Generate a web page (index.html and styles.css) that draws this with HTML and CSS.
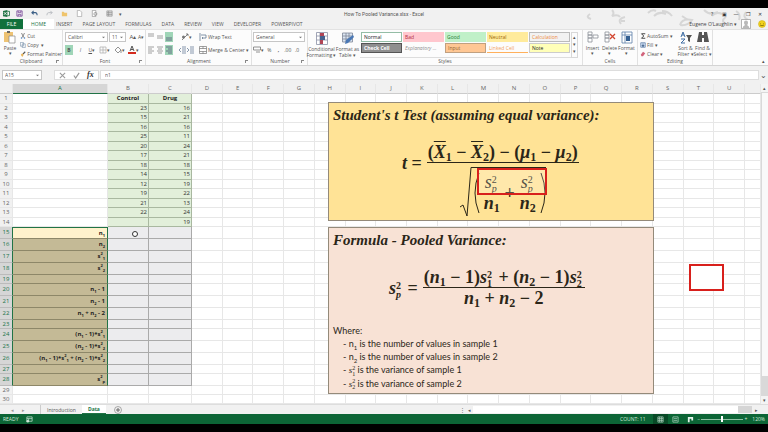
FILE: index.html
```html
<!doctype html>
<html lang="en">
  <head>
    <meta charset="utf-8">
    <title>How To Pooled Variance.xlsx - Excel</title>
    <link rel="stylesheet" href="styles.css">
  </head>

  <body>
    <div class="app">
      <header class="titlebar">
        <svg class="swirls" viewBox="0 0 180 20" aria-hidden="true">
          <path d="M14 6q-5 3 1 5M36 2q3 3 0 6q6-2 8 1M49 9q-8 2-4 7M45 13h4M72 5q4-4 8-2M78 8q5-5 12-2M86 3q6 0 10 5M104 17q2-7 12-5q-4 6-12 5M106 8l6 4M128 2q6 6 14 2M136 8q4-5 10-2M150 9q-6 4 0 7M160 3q5 3 3 9M170 4q-4 5 2 8"/>
        </svg>
        <div class="quick">
          <svg viewBox="0 0 8 8"><path fill="#217346" d="M0 1l5-1v8l-5-1z"/><path fill="none" stroke="#217346" d="M5 1.500h2.500v5h-2.500"/><path stroke="#fff" d="M1 2.500l3 3m0-3l-3 3"/></svg>
          <svg viewBox="0 0 8 8"><path fill="none" stroke="#80539f" d="M1 1h6v6h-6zM2.500 1v2h3v-2M2.500 7v-2h3v2"/></svg>
          <svg viewBox="0 0 8 8"><path fill="none" stroke="#3b5f86" stroke-width="1.200" d="M3 1l-2 2l2 2M1 3h4q2 0 2 3"/></svg>
          <svg viewBox="0 0 8 8"><path fill="none" stroke="#b4b8bd" d="M5 1l2 2l-2 2M7 3h-4q-2 0-2 3"/></svg>
          <svg viewBox="0 0 8 8"><path fill="#efc46c" d="M1 2h2l1 1h3v4h-6z"/></svg>
          <svg viewBox="0 0 8 8"><path fill="#fff" stroke="#999" stroke-width=".7" d="M1.500 .5h3l2 2v5h-5z"/></svg>
          <svg viewBox="0 0 8 8"><path fill="#fff" stroke="#888" stroke-width=".7" d="M1.500 .5h4v7h-4z"/><circle cx="5" cy="4.500" r="1.700" fill="none" stroke="#777" stroke-width=".7"/></svg>
          <svg viewBox="0 0 8 8"><path fill="#ddd" stroke="#888" stroke-width=".7" d="M1 1h6v6h-6zM1 3h6M1 5h6M3 1v6"/></svg>
          <span class="caret">▾</span>
        </div>
        <span class="doc-title">How To Pooled Variance.xlsx - Excel</span>
        <div class="win-buttons">
          <button>?</button><button>▣</button><button>—</button><button>❐</button><button>✕</button>
        </div>
      </header>

      <nav class="tabs">
        <button class="file">FILE</button>
        <button class="on">HOME</button>
        <button>INSERT</button>
        <button>PAGE LAYOUT</button>
        <button>FORMULAS</button>
        <button>DATA</button>
        <button>REVIEW</button>
        <button>VIEW</button>
        <button>DEVELOPER</button>
        <button>POWERPIVOT</button>
        <div class="account">
          <a href="#">Eugene O'Laughlin ▾</a>
          <svg class="avatar" viewBox="0 0 10 10"><path fill="#fff" stroke="#888" stroke-width=".6" d="M.5 .5h9v9h-9z"/><path fill="#b9b9b9" d="M3 3.500a2 2 0 0 1 4 0q0 2-1 2.500q2.500 1 2.500 3.500h-7q0-2.500 2.500-3.500q-1-1-1-2.500"/></svg>
          <svg class="smile" viewBox="0 0 8 8"><circle cx="4" cy="4" r="3.500" fill="#f2d21c" stroke="#c9a90c" stroke-width=".5"/><path fill="none" stroke="#6b5a00" stroke-width=".7" d="M2.500 3v.5M5.500 3v.5M2 5q2 1.500 4 0"/></svg>
        </div>
      </nav>

      <section class="ribbon">
        <div class="group clipboard">
          <div class="tools">
            <button class="big"><svg viewBox="0 0 12 13"><path fill="#eec374" d="M0 1h9v10h-9z"/><path fill="#666" d="M3 0h3v2h-3z"/><path fill="#fff" stroke="#888" stroke-width=".7" d="M5 5h6v7h-6z"/></svg>Paste<i>▾</i></button>
            <div class="stack">
              <button><svg viewBox="0 0 8 8"><path fill="none" stroke="#666" d="M2 0l3 6M6 0l-3 6"/><circle cx="2" cy="6.500" r="1" fill="#4a7ebb"/><circle cx="6" cy="6.500" r="1" fill="#4a7ebb"/></svg>Cut</button>
              <button><svg viewBox="0 0 8 8"><path fill="#fff" stroke="#7089a5" stroke-width=".8" d="M.5 .5h4v5h-4zM3 2.500h4v5h-4z"/></svg>Copy &nbsp;▾</button>
              <button><svg viewBox="0 0 8 8"><path stroke="#555" stroke-width="1.500" d="M7 1l-3 3"/><path fill="#e8b458" d="M1 5l2-2l2 2l-2 3z"/></svg>Format Painter</button>
            </div>
          </div>
          <h6>Clipboard</h6><span class="launch"></span>
        </div>

        <div class="group font">
          <div class="tools rows">
            <div class="row">
              <select class="face" aria-label="Font"><option>Calibri</option></select>
              <select class="size" aria-label="Font size"><option>11</option></select>
              <button class="grow">A▴</button><button>A▾</button>
            </div>
            <div class="row spread">
              <button class="pressed"><b>B</b></button><button><em>I</em></button><button><u>U</u> ▾</button>
              <button><svg viewBox="0 0 8 8"><path fill="none" stroke="#aaa" stroke-width=".7" d="M1 1h6v6h-6zM4 1v6M1 4h6"/></svg>▾</button>
              <button><svg viewBox="0 0 8 8"><path fill="none" stroke="#777" stroke-width=".8" d="M1 4l3-3l3 3l-3 3zM7 4v3"/></svg>▾</button>
              <button><svg viewBox="0 0 8 8"><path fill="none" stroke="#555" d="M2 5l2-5l2 5M3 3.500h2"/><path fill="#d42b1e" d="M0 6h8v2h-8z"/></svg>▾</button>
            </div>
          </div>
          <h6>Font</h6><span class="launch"></span>
        </div>

        <div class="group align">
          <div class="tools rows">
            <div class="row">
              <button><svg viewBox="0 0 8 8"><path stroke="#888" stroke-width=".8" d="M1 1h6M1 3h6"/></svg></button>
              <button><svg viewBox="0 0 8 8"><path stroke="#888" stroke-width=".8" d="M1 3h6M1 5h6"/></svg></button>
              <button class="pressed"><svg viewBox="0 0 8 8"><path stroke="#557" stroke-width=".8" d="M1 5h6M1 7h6"/></svg></button>
              <button class="orient"><svg viewBox="0 0 8 8"><path fill="none" stroke="#666" stroke-width=".8" d="M1 7l6-6M5 1h2v2"/><circle cx="2.500" cy="4" r="1.500" fill="#777"/></svg>▾</button>
              <button class="wrap"><svg viewBox="0 0 8 8"><path fill="none" stroke="#667c94" stroke-width=".8" d="M1 0v8M2 2h5v3h-4M4 4l-1 1l1 1"/></svg>Wrap Text</button>
            </div>
            <div class="row">
              <button><svg viewBox="0 0 8 8"><path stroke="#888" stroke-width=".8" d="M1 1h6M1 3h4M1 5h6M1 7h4"/></svg></button>
              <button><svg viewBox="0 0 8 8"><path stroke="#888" stroke-width=".8" d="M1 1h6M2 3h4M1 5h6M2 7h4"/></svg></button>
              <button class="pressed"><svg viewBox="0 0 8 8"><path stroke="#557" stroke-width=".8" d="M1 1h6M3 3h4M1 5h6M3 7h4"/></svg></button>
              <button class="orient"><svg viewBox="0 0 8 8"><path fill="none" stroke="#6a7f99" stroke-width=".8" d="M4 1h4M4 3h4M4 5h4M4 7h4M3 2l-2 2l2 2"/></svg><svg viewBox="0 0 8 8"><path fill="none" stroke="#6a7f99" stroke-width=".8" d="M4 1h4M4 3h4M4 5h4M4 7h4M1 2l2 2l-2 2"/></svg></button>
              <button class="wrap"><svg viewBox="0 0 8 8"><path fill="#fff" stroke="#777" stroke-width=".7" d="M.5 .5h7v7h-7zM.5 2.500h7M.5 5.500h7M4 .5v2M4 5.500v2"/></svg>Merge &amp; Center ▾</button>
            </div>
          </div>
          <h6>Alignment</h6><span class="launch"></span>
        </div>

        <div class="group number">
          <div class="tools rows">
            <div class="row"><select class="fmt" aria-label="Number format"><option>General</option></select></div>
            <div class="row spread">
              <button><svg viewBox="0 0 8 8"><path fill="none" stroke="#777" stroke-width=".8" d="M.5 1h7v3h-7zM3 6h4"/></svg>▾</button><button>%</button><button><b>,</b></button><button>.00</button><button>.0</button>
            </div>
          </div>
          <h6>Number</h6><span class="launch"></span>
        </div>

        <div class="group styles">
          <div class="tools">
            <button class="big wide"><svg viewBox="0 0 12 13"><path fill="#fff" stroke="#8a8fa5" stroke-width=".8" d="M.5 .5h11v12h-11zM.5 4h11M.5 8h11M4 .5v12"/><path fill="#b04455" d="M4 1h4v3h-4zM4 8h3v4h-3z"/><path fill="#46628e" d="M4 4h5v4h-5z"/></svg>Conditional<br>Formatting ▾</button>
            <button class="big narrow"><svg viewBox="0 0 12 13"><path fill="#dbe5f1" stroke="#7d8797" stroke-width=".8" d="M.5 1h10v9h-10zM.5 4h10M.5 7h10M4 1v9M7 1v9"/><path fill="#4a78b5" d="M4 8l7-5l1 2l-6 6l-3 1z"/></svg>Format as<br>Table ▾</button>
            <div class="gallery">
              <button class="normal">Normal</button><button class="bad">Bad</button><button class="good">Good</button><button class="neutral">Neutral</button><button class="calc">Calculation</button>
              <button class="check">Check Cell</button><button class="expl">Explanatory ...</button><button class="inp">Input</button><button class="linked">Linked Cell</button><button class="note">Note</button>
            </div>
            <div class="scroller"><button>▴</button><button>▾</button><button>▾</button></div>
          </div>
          <h6>Styles</h6>
        </div>

        <div class="group cells">
          <div class="tools">
            <button class="big"><svg viewBox="0 0 12 13"><path fill="#fff" stroke="#8a9098" stroke-width=".8" d="M1 1h4v3h-4zM1 4h4v3h-4zM1 7h4v4h-4zM6 4h5v3h-5z"/></svg>Insert<i>▾</i></button>
            <button class="big"><svg viewBox="0 0 12 13"><path fill="#fff" stroke="#8a9098" stroke-width=".8" d="M1 1h4v3h-4zM1 4h4v3h-4zM1 7h4v4h-4z"/><path stroke="#d2452f" stroke-width="1.300" d="M6 3l5 5m0-5l-5 5"/></svg>Delete<i>▾</i></button>
            <button class="big"><svg viewBox="0 0 12 13"><path fill="#fff" stroke="#5a7fa8" stroke-width=".8" d="M1 1h10v11h-10zM4 1v11M1 4h10"/><path fill="#356092" d="M5 5h4v5h-4z"/></svg>Format<i>▾</i></button>
          </div>
          <h6>Cells</h6>
        </div>

        <div class="group editing">
          <div class="tools">
            <div class="stack">
              <button><svg viewBox="0 0 8 8"><path fill="none" stroke="#444" stroke-width="1.300" d="M7 1h-5l3 3l-3 3h5"/></svg>AutoSum ▾</button>
              <button><svg viewBox="0 0 8 8"><path fill="#dbe7f5" stroke="#5b7ea6" d="M1 1h6v6h-6z"/><path stroke="#2d5c95" d="M4 2v4M2.500 4.500l1.500 1.500l1.500-1.500"/></svg>Fill ▾</button>
              <button><svg viewBox="0 0 8 8"><path fill="#d2647c" d="M1 5l3-4l3 2l-3 4h-2z"/></svg>Clear ▾</button>
            </div>
            <button class="big"><svg viewBox="0 0 12 13"><path fill="none" stroke="#3e6da3" d="M1 6l2-5l2 5M2 4h2M1 8h4l-4 4h4"/><path fill="#555" d="M6 4h6l-2 3v4l-2-1v-3z"/></svg>Sort &amp;<br>Filter ▾</button>
            <button class="big"><svg viewBox="0 0 12 13"><path fill="#555" d="M2 1h3v3h2v-3h3l2 10h-5v-4h-2v4h-5z"/></svg>Find &amp;<br>Select ▾</button>
          </div>
          <h6>Editing</h6>
        </div>
        <span class="collapse">▴</span>
      </section>

      <div class="formula-bar">
        <select class="name-box" aria-label="Name box"><option>A15</option></select>
        <div class="fx">
          <svg viewBox="0 0 8 8"><path stroke="#999" stroke-width="1.200" d="M1 1l6 6m0-6l-6 6"/></svg>
          <svg viewBox="0 0 8 8"><path fill="none" stroke="#999" stroke-width="1.300" d="M1 4l2 3l4-6"/></svg>
          <em>fx</em>
        </div>
        <input class="content" aria-label="Formula" value="n1">
        <span class="expand">⌄</span>
      </div>

      <main class="work">
        <div class="sheet">
          <table id="grid"></table>

          <svg class="cursor" viewBox="0 0 8 8"><circle cx="4" cy="4" r="2.500" fill="#fff" stroke="#333"/></svg>

          <section class="card t-test">
            <h2>Student's t Test (assuming equal variance):</h2>
            <div class="eq">
              <span class="lhs"><var>t</var> =</span>
              <div class="frac">
                <div class="num">(<var class="bar">X</var><sub>1</sub> − <var class="bar">X</var><sub>2</sub>) − (<var>μ</var><sub>1</sub> − <var>μ</var><sub>2</sub>)</div>
                <div class="root">
                  <svg class="radical" viewBox="0 0 14 50" preserveAspectRatio="none"><path fill="none" stroke="#2b2618" d="M0 40l3-2l4 11l4-48.500h3"/></svg>
                  <div class="radicand">
                    <svg class="paren" viewBox="0 0 6 42"><path fill="none" stroke="#2b2618" d="M5 1q-8 20 0 40"/></svg>
                    <div class="ratio"><span class="light"><var>s</var><span class="ss"><span>2</span><var>p</var></span></span><span><var>n</var><sub>1</sub></span></div>
                    <span class="plus">+</span>
                    <div class="ratio"><span class="light"><var>s</var><span class="ss"><span>2</span><var>p</var></span></span><span><var>n</var><sub>2</sub></span></div>
                    <svg class="paren" viewBox="0 0 6 42"><path fill="none" stroke="#2b2618" d="M1 1q8 20 0 40"/></svg>
                  </div>
                </div>
              </div>
            </div>
          </section>

          <section class="card pooled">
            <h2>Formula - Pooled Variance:</h2>
            <div class="eq">
              <span class="lhs"><var>s</var><span class="ss"><span>2</span><var>p</var></span> =</span>
              <div class="frac">
                <div class="num">(<var>n</var><sub>1</sub> − 1)<var>s</var><span class="ss"><span>2</span><span>1</span></span> + (<var>n</var><sub>2</sub> − 1)<var>s</var><span class="ss"><span>2</span><span>2</span></span></div>
                <div class="den"><var>n</var><sub>1</sub> + <var>n</var><sub>2</sub> − 2</div>
              </div>
            </div>
            <p>Where:</p>
            <ul>
              <li>- n<sub>1</sub> is the number of values in sample 1</li>
              <li>- n<sub>2</sub> is the number of values in sample 2</li>
              <li>- <i>s</i><span class="ss"><span>2</span><span>1</span></span> is the variance of sample 1</li>
              <li>- <i>s</i><span class="ss"><span>2</span><span>2</span></span> is the variance of sample 2</li>
            </ul>
          </section>

          <div class="mark over-sp"></div>
          <div class="mark spare"></div>
        </div>
        <div class="vscroll"><span>▴</span><div class="thumb"></div><span>▾</span></div>
      </main>

      <div class="sheet-tabs">
        <span class="nav">◂</span><span class="nav">▸</span>
        <button>Introduction</button><button class="on">Data</button>
        <button class="add" aria-label="New sheet"><svg viewBox="0 0 8 8"><circle cx="4" cy="4" r="3.500" fill="none" stroke="#888" stroke-width=".7"/><path stroke="#666" d="M2 4h4M4 2v4"/></svg></button>
        <div class="hscroll"><span>⋮</span><span class="arrow">◂</span><div class="track"><div class="thumb"></div></div><span class="arrow">▸</span></div>
      </div>

      <footer class="status">
        <span>READY</span>
        <svg viewBox="0 0 8 8"><path fill="none" stroke="#cfe5d8" stroke-width=".8" d="M1 1h6v5h-6zM1 3h6M3 3v3"/><circle cx="2" cy="6" r="1.500" fill="#cfe5d8"/></svg>
        <span class="count">COUNT: 11</span>
        <button class="on" aria-label="Normal view"><svg viewBox="0 0 8 8"><path fill="none" stroke="#b5d6c3" stroke-width=".8" d="M1 1h6v6h-6zM1 3h6M1 5h6M3 1v6M5 1v6"/></svg></button>
        <button aria-label="Page layout"><svg viewBox="0 0 8 8"><path fill="none" stroke="#b5d6c3" stroke-width=".8" d="M1 1h6v6h-6zM2 3h4M2 5h4"/></svg></button>
        <button aria-label="Page break"><svg viewBox="0 0 8 8"><path fill="#e4f2ea" d="M1 1h6v4h-2v-2h-2v4h-2z"/></svg></button>
        <span class="zoom">−<input type="range" min="10" max="230" value="120" aria-label="Zoom">+</span>
        <span class="pct">120%</span>
      </footer>
    </div>
    <script src="script.js"></script>
  </body>
</html>
```

FILE: styles.css
```css
* { box-sizing: border-box; }

body {
  margin: 0;
  padding: 8px 0;
  background: #000;
  color: #555;
  font: 5px/8px "Open Sans", sans-serif;
}

button, select, input {
  margin: 0;
  padding: 0;
  border: 0;
  background: none;
  color: inherit;
  font: inherit;
  appearance: none;
}

button { white-space: nowrap; }
svg { width: 8px; height: 8px; flex: none; }
i { font-style: normal; }

.app { background: #f1f1f1; overflow: hidden; }

/* title bar */
.titlebar {
  position: relative;
  display: flex;
  align-items: center;
  justify-content: space-between;
  height: 11px;
  padding: 0 3px;
}
.quick { display: flex; align-items: center; gap: 6px; }
.quick svg { width: 7px; height: 7px; }
.quick svg:nth-child(n+3) { margin-left: 2px; }
.doc-title {
  position: absolute;
  left: 0;
  right: 0;
  text-align: center;
  font: 5px/8px Roboto, sans-serif;
}
.win-buttons { position: relative; display: flex; gap: 2px; }
.win-buttons button { width: 10px; color: #333; }
.swirls {
  position: absolute;
  right: 12px;
  top: 0;
  width: 180px;
  height: 20px;
  fill: none;
  stroke: #d6d6d6;
  stroke-width: 2;
}

/* ribbon tabs */
.tabs { position: relative; display: flex; align-items: stretch; height: 10px; }
.tabs button { padding: 0 5px; }
.tabs .file { width: 23px; background: #10703c; color: #fff; }
.tabs .on { width: 31px; background: #fff; color: #217346; }
.tabs .on + button { padding-left: 2px; }
.account { display: flex; align-items: center; margin-left: auto; padding-right: 2px; }
.account a { color: #444; text-decoration: none; }
.avatar { width: 10px; height: 10px; margin: 0 7px 0 4px; }

/* ribbon */
.ribbon {
  display: flex;
  height: 37px;
  background: #fcfcfc;
  border-top: 1px solid #e2e2e2;
  border-bottom: 1px solid #d4d4d4;
}
.group {
  position: relative;
  display: flex;
  flex-direction: column;
  justify-content: space-between;
  border-right: 1px solid #e1e1e1;
}
.group h6 { margin: 0; font: inherit; line-height: 7px; text-align: center; }
.launch {
  position: absolute;
  right: 3px;
  bottom: 2px;
  width: 3px;
  height: 3px;
  border: solid #888;
  border-width: 1px 0 0 1px;
}
.tools { display: flex; padding-top: 1px; }
.rows { flex-direction: column; gap: 3px; }
.row { display: flex; align-items: center; height: 10px; }
.spread { justify-content: space-between; }
.row button { display: flex; align-items: center; justify-content: center; min-width: 8px; height: 10px; }
.pressed { background: #9fd5b7; }
.stack { display: flex; flex-direction: column; }
.stack button { display: flex; align-items: center; gap: 1px; height: 9px; }
.stack svg { width: 6px; height: 6px; }
.big {
  display: flex;
  flex-direction: column;
  align-items: center;
  width: 17px;
  line-height: 6px;
}
.big svg { width: 12px; height: 13px; margin-bottom: 1px; }
.big i { line-height: 5px; }

select {
  height: 10px;
  padding: 0 2px;
  border: 1px solid #c6c6c6;
  background: #fff url("data:image/svg+xml,%3Csvg xmlns='http://www.w3.org/2000/svg' viewBox='0 0 4 4'%3E%3Cpath fill='%23777' d='M0 1h4l-2 2z'/%3E%3C/svg%3E") no-repeat right 2px center / 3px 3px;
}

.clipboard { width: 63px; }
.clipboard .tools { gap: 2px; padding-left: 2px; }
.font { width: 83px; padding-left: 2px; }
.font .tools, .number .tools { padding-top: 2px; }
.face { width: 43px; }
.size { width: 17px; margin-left: 1px; }
.grow { margin-left: 3px; font-size: 6px; }
.font .spread { padding-right: 6px; }
.align { width: 106px; padding-left: 1px; }
.align .tools { padding-top: 2px; }
.align .row { gap: 1px; }
.align .orient { width: 24px; }
.wrap svg { margin-right: 1px; }
.number { width: 56px; padding-left: 1px; }
.fmt { width: 52px; }
.number .spread { padding-right: 6px; }
.styles { width: 275px; }
.styles .tools { padding-top: 2px; }
.big.wide { width: 27px; }
.big.narrow { width: 25px; }
.gallery {
  display: grid;
  grid-template-columns: repeat(5, 41px);
  grid-template-rows: 10px 10px;
  gap: 1px;
  padding: 0 1px 1px;
  border-bottom: 1px solid #ddd;
}
.gallery button { padding: 0 2px; text-align: left; }
.gallery .normal { background: #fff; border: 1px solid #94bda6; color: #222; }
.bad { background: #ffc7ce; color: #b02a3d; }
.good { background: #c0f0c8; color: #1f7a34; }
.neutral { background: #ffeb9c; color: #9c6500; }
.gallery .calc { background: #f2f2f2; border: 1px solid #bbb; color: #ee8a3c; }
.gallery .check { background: #8f8f8f; border: 1px solid #555; color: #fff; font-weight: bold; }
.expl { color: #8c8c8c; font-style: italic; }
.gallery .inp { background: #ffc794; border: 1px solid #c0a080; color: #94622e; }
.gallery .linked { border-bottom: 1px solid #ffb05c; color: #f2a25c; }
.gallery .note { background: #ffffb8; border: 1px solid #ccc; color: #222; }
.scroller { display: flex; flex-direction: column; border: 1px solid #d8d8d8; }
.scroller button { width: 5px; height: 7px; line-height: 6px; }
.cells { width: 55px; }
.cells .tools { padding-left: 1px; }
.editing { width: 75px; }
.editing .tools { padding-left: 2px; }
.editing .stack { width: 37px; }
.collapse { margin: auto 3px 0 auto; }

/* formula bar */
.formula-bar { display: flex; align-items: center; height: 18px; }
.name-box { width: 40px; margin-left: 2px; }
.fx {
  display: flex;
  align-items: center;
  gap: 7px;
  width: 45px;
  height: 10px;
  margin: 0 1px 0 12px;
  padding-left: 4px;
  border: 1px solid #ddd;
  background: #fff;
}
.fx svg { width: 7px; height: 7px; }
.fx em { color: #333; font: italic bold 8px/8px "Liberation Serif", serif; }
.content { flex: 1; height: 10px; padding: 0 4px; border: 1px solid #ddd; background: #fff; }
.expand { width: 9px; text-align: center; font-size: 8px; }

/* worksheet */
.work { display: flex; }
.sheet { position: relative; flex: 1; overflow: hidden; background: #fff; }
table { width: 100%; table-layout: fixed; border-collapse: separate; border-spacing: 0; }
th, td {
  height: 9px;
  padding: 0 1px;
  border: solid #e7e7e7;
  border-width: 0 1px 1px 0;
  line-height: 7px;
  overflow: hidden;
  white-space: nowrap;
}
th { background: #f1f1f1; color: #666; font-weight: normal; font-size: 6px; }
thead th { height: 10px; border-bottom-color: #ccc; }
th.sel { background: #d6d6d6; color: #217346; border-bottom-color: #217346; }
tbody th { padding: 0; }
tbody th.sel { border-bottom-color: #bbb; border-right-color: #217346; }
td { color: #333; font-size: 6px; text-align: right; }
.odd td, .odd th { height: 10px; }
.tall td, .tall th { height: 12px; line-height: 9px; }
.c-head { width: 13px; }
.c-a { width: 95px; }
.c-b { width: 41px; }
.c-c { width: 43px; }
.c-last { width: 16px; }
td.data { background: #e2efda; border-color: #a9b8a0; }
td.title { font-weight: bold; text-align: center; color: #222; }
td.calc-cell { background: #ececee; border-color: #aaa; }
td.label {
  padding-right: 2px;
  background: #c4ba96;
  border-color: #8d8768;
  border-right-color: #217346;
  color: #222;
  font-weight: bold;
}
td.label.active { background: #fff2cc; border-top: 1px solid #217346; }
td sub, td sup { font-size: 4px; line-height: 0; }

.cursor { position: absolute; left: 131px; top: 146px; }

.card {
  position: absolute;
  left: 328px;
  width: 326px;
  padding: 2px 4px;
  border: 1px solid #948a7a;
  color: #2b2618;
}
.t-test { top: 18px; height: 119px; background: #ffe396; }
.pooled { top: 143px; height: 167px; background: #f8e2d5; }
.card h2 { margin: 0; font: italic bold 15px/20px "Liberation Serif", serif; white-space: nowrap; }

.eq {
  display: flex;
  align-items: flex-start;
  gap: 5px;
  font: bold 18px/20px "Liberation Serif", serif;
  white-space: nowrap;
}
.eq sub { font-size: 12px; line-height: 0; vertical-align: -3px; }
.lhs { margin-top: 11px; }
.frac { display: flex; flex-direction: column; align-items: center; }
.num { height: 21px; padding: 0 1px; border-bottom: 1px solid #2b2618; }
.bar { text-decoration: overline; text-decoration-thickness: 1px; }
.ss {
  display: inline-flex;
  flex-direction: column;
  margin-right: 2px;
  vertical-align: middle;
  font-size: 10px;
  line-height: 9px;
}
.t-test .eq { padding: 17px 0 0 69px; }
.root { display: flex; margin-top: 4px; }
.radical { width: 14px; height: 50px; }
.radicand { display: flex; align-items: center; height: 50px; border-top: 1px solid #2b2618; }
.paren { width: 6px; height: 42px; }
.ratio { display: flex; flex-direction: column; align-items: center; width: 24px; }
.light { font-weight: normal; }
.plus { width: 12px; text-align: center; }

.pooled .eq { padding: 17px 0 0 56px; }
.pooled p { margin: 16px 0 0; }
.pooled p, .pooled li { font: 9px/13px Lato, sans-serif; }
.pooled ul { margin: 0; padding: 0 0 0 10px; list-style: none; }
.pooled li sub { font-size: 6px; line-height: 0; }
.pooled li .ss { margin-right: 0; font: 6px/6px "Liberation Serif", serif; }
.pooled li i { font: italic 9px/9px "Liberation Serif", serif; }

.mark { position: absolute; border: 2px solid #d8201c; }
.over-sp { left: 477px; top: 84px; width: 70px; height: 27px; background: #fff3; }
.spare { left: 689px; top: 180px; width: 35px; height: 27px; background: #fff; }

.vscroll { display: flex; flex-direction: column; width: 7px; background: #d9d9d9; text-align: center; }
.vscroll span { background: #f4f4f4; }
.vscroll .thumb { flex: 1; margin: 1px 0 20px 1px; background: #f9f9f9; }

/* sheet tabs and status bar */
.sheet-tabs { display: flex; align-items: center; height: 10px; padding-left: 7px; border-top: 1px solid #ddd; }
.nav { width: 11px; text-align: center; color: #999; }
.sheet-tabs button { height: 9px; padding: 0 6px; }
.sheet-tabs button:first-of-type { margin-left: 11px; border-left: 1px solid #ccc; }
.sheet-tabs .on { background: #fff; border-bottom: 1px solid #217346; color: #217346; font-weight: bold; }
.sheet-tabs .add { display: flex; align-items: center; margin-left: 2px; }
.hscroll { display: flex; align-items: center; width: 308px; margin-left: auto; padding-right: 8px; }
.arrow { width: 8px; text-align: center; }
.track { flex: 1; height: 7px; background: #fff; }
.track .thumb { width: 14px; height: 7px; margin-left: auto; background: #d5d5d5; }

.status { display: flex; align-items: center; height: 10px; padding: 0 3px; background: #0c6536; color: #d5ebdd; }
.status > svg { margin-left: 8px; width: 7px; height: 7px; }
.count { margin-left: auto; }
.status button { display: flex; align-items: center; justify-content: center; width: 15px; height: 10px; }
.count + button { margin-left: 7px; }
.status button.on { background: #084a27; }
.status button svg { width: 7px; height: 7px; }
.zoom { display: flex; align-items: center; gap: 1px; }
.zoom input { width: 42px; height: 8px; background: linear-gradient(#8fc0a3, #8fc0a3) no-repeat center / 100% 1px; }
.zoom input::-webkit-slider-thumb { appearance: none; width: 2px; height: 6px; background: #fff; }
.pct { margin-left: 5px; }
```

FILE: script.js
```js
const control = [23, 15, 16, 25, 20, 17, 18, 14, 12, 19, 21, 22];
const drug = [16, 21, 16, 11, 24, 21, 18, 15, 19, 22, 13, 24, 19];

const n1 = 'n<sub>1</sub>';
const n2 = 'n<sub>2</sub>';
const s1 = 's<sup>2</sup><sub>1</sub>';
const s2 = 's<sup>2</sup><sub>2</sub>';

const labels = {
  15: n1,
  16: n2,
  17: s1,
  18: s2,
  20: `${n1} - 1`,
  21: `${n2} - 1`,
  22: `${n1} + ${n2} - 2`,
  24: `(${n1} - 1)*${s1}`,
  25: `(${n2} - 1)*${s2}`,
  26: `(${n1} - 1)*${s1} + (${n2} - 1)*${s2}`,
  28: 's<sup>2</sup><sub>p</sub>',
};

const columns = 'ABCDEFGHIJKLMNOPQRSTU'.split('');
const widths = { A: 'c-a', B: 'c-b', C: 'c-c' };

let html = '<thead><tr><th class="c-head"></th>';
for (const c of columns) {
  html += `<th class="${widths[c] || ''}${c === 'A' ? ' sel' : ''}">${c}</th>`;
}
html += '<th class="c-last"></th></tr></thead><tbody>';

for (let r = 1; r <= 30; r++) {
  const selected = r >= 15 && r <= 28;
  const size = labels[r] ? 'tall' : r < 15 && r % 2 ? 'odd' : '';
  html += `<tr class="${size}"><th class="${selected ? 'sel' : ''}">${r}</th>`;

  if (selected) {
    html += `<td class="label${r === 15 ? ' active' : ''}">${labels[r] || ''}</td>`;
    html += '<td class="calc-cell"></td><td class="calc-cell"></td>';
  } else if (r === 1) {
    html += '<td></td><td class="data title">Control</td><td class="data title">Drug</td>';
  } else if (r < 15) {
    html += `<td></td><td class="data">${control[r - 2] || ''}</td><td class="data">${drug[r - 2] || ''}</td>`;
  } else {
    html += '<td></td><td></td><td></td>';
  }

  html += '<td></td>'.repeat(columns.length - 2) + '</tr>';
}

document.getElementById('grid').innerHTML = html + '</tbody>';
```
